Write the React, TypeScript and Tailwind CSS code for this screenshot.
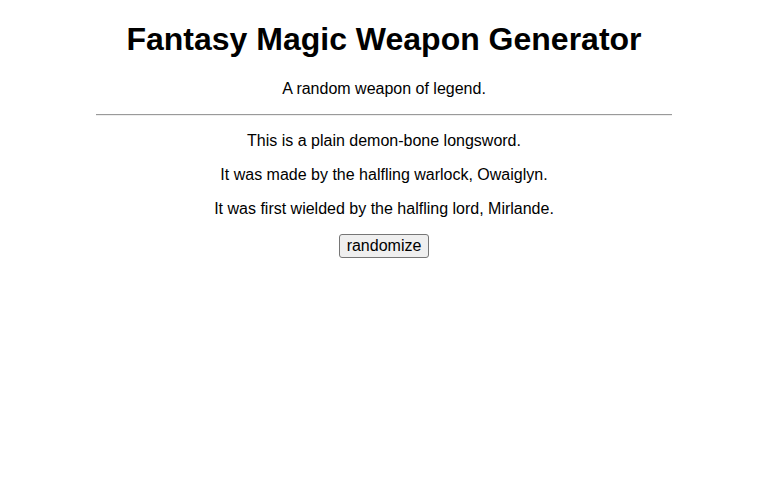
import React, { useState } from "react";

const weapons = [
  {
    item: "This is a plain demon-bone longsword.",
    maker: "It was made by the halfling warlock, Owaiglyn.",
    wielder: "It was first wielded by the halfling lord, Mirlande.",
  },
  {
    item: "This is a gleaming star-iron warhammer.",
    maker: "It was made by the dwarven smith, Brundak.",
    wielder: "It was first wielded by the human knight, Elspeth.",
  },
  {
    item: "This is a cursed obsidian dagger.",
    maker: "It was made by the elven witch, Saerith.",
    wielder: "It was first wielded by the orc chieftain, Grommash.",
  },
];

const App = () => {
  const [idx, setIdx] = useState(0);
  const w = weapons[idx];

  const randomize = () => {
    setIdx((idx + 1 + Math.floor(Math.random() * (weapons.length - 1))) % weapons.length);
  };

  return (
    <div className="text-center text-black bg-white text-[16px] font-['Liberation_Sans',Arial,sans-serif] leading-[normal]">
      <h1 className="text-[32px] font-bold my-[21.44px]">Fantasy Magic Weapon Generator</h1>
      <p className="my-4">A random weapon of legend.</p>

      <hr className="w-3/4 mx-auto my-4 h-0 border-t border-b border-t-[#9a9a9a] border-b-[#eeeeee]" />

      <p className="my-4">{w.item}</p>
      <p className="my-4">{w.maker}</p>
      <p className="my-4">{w.wielder}</p>

      <div className="my-4">
        <button
          onClick={randomize}
          className="px-[7px] py-[2px] border border-[#767676] rounded-[3px] bg-[#efefef] hover:bg-[#e5e5e5]"
        >
          randomize
        </button>
      </div>
    </div>
  );
};

export default App;
